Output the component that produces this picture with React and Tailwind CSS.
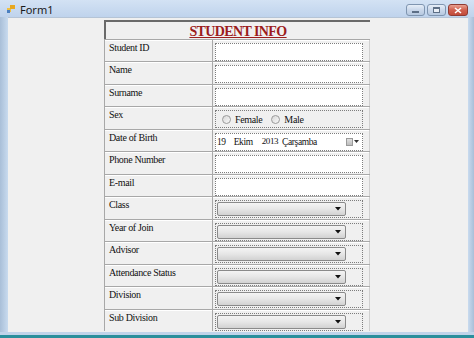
import React from "react";

const serif = { fontFamily: '"Liberation Serif", "Times New Roman", serif' };

function TextBox() {
  return <div className="mt-[3px] ml-[2px] w-[148px] h-[18px] bg-white border border-dotted border-[#7d7d7d]" />;
}

function Combo() {
  return (
    <div className="mt-[3px] ml-[2px] w-[148px] h-[18px] border border-dotted border-[#7d7d7d] flex items-center pl-[1px]">
      <div className="w-[129px] h-[14px] rounded-[2px] border border-[#8a8a8a] bg-gradient-to-b from-[#f4f4f4] via-[#e6e6e6] to-[#d2d2d2] flex items-center justify-end pr-[4px]">
        <svg width="6" height="4" viewBox="0 0 6 4"><path d="M0 0H6L3 3.5Z" fill="#111" /></svg>
      </div>
    </div>
  );
}

function Radio({ label }) {
  return (
    <div className="flex items-center gap-[4px]">
      <div className="w-[9px] h-[9px] rounded-full border border-[#9a9a9a] bg-gradient-to-br from-[#d8d8d8] to-[#f8f8f8]" />
      <span className="text-[10px] tracking-[-0.35px] text-[#111]" style={serif}>{label}</span>
    </div>
  );
}

function SexBox() {
  return (
    <div className="mt-[3px] ml-[2px] w-[148px] h-[18px] border border-dotted border-[#7d7d7d] flex items-center pl-[6px] gap-[9px]">
      <Radio label="Female" />
      <Radio label="Male" />
    </div>
  );
}

function DateBox() {
  return (
    <div className="mt-[3px] ml-[2px] w-[148px] h-[18px] bg-white border border-dotted border-[#7d7d7d] flex items-center pl-[1px] pr-[3px] text-[9.5px] tracking-[-0.4px] text-[#111]" style={serif}>
      <span>19</span>
      <span className="ml-[8px]">Ekim</span>
      <span className="ml-[9px] text-[9px]">2013</span>
      <span className="ml-[4px]">Çarşamba</span>
      <div className="ml-auto flex items-center gap-[1px]">
        <div className="w-[7px] h-[8px] border border-[#9a9a9a] bg-gradient-to-b from-[#e0e0e0] to-[#bdbdbd]" />
        <svg width="5" height="3" viewBox="0 0 5 3"><path d="M0 0H5L2.5 3Z" fill="#333" /></svg>
      </div>
    </div>
  );
}

const rows = [
  ["Student ID", "text"],
  ["Name", "text"],
  ["Surname", "text"],
  ["Sex", "sex"],
  ["Date of Birth", "date"],
  ["Phone Number", "text"],
  ["E-mail", "text"],
  ["Class", "combo"],
  ["Year of Join", "combo"],
  ["Advisor", "combo"],
  ["Attendance Status", "combo"],
  ["Division", "combo"],
  ["Sub Division", "combo"],
];

function Control({ kind }) {
  if (kind === "text") return <TextBox />;
  if (kind === "sex") return <SexBox />;
  if (kind === "date") return <DateBox />;
  return <Combo />;
}

function TitleButton({ kind }) {
  if (kind === "close") {
    return (
      <div className="w-[20px] h-[12px] rounded-[3px] border border-[#8f3b33] bg-gradient-to-b from-[#e8a092] via-[#d0604f] to-[#c24a3a] flex items-center justify-center">
        <svg width="8" height="7" viewBox="0 0 8 7"><path d="M1 1L7 6M7 1L1 6" stroke="#fff" strokeWidth="1.6" /></svg>
      </div>
    );
  }
  return (
    <div className="w-[19px] h-[12px] rounded-[3px] border border-[#7f95b0] bg-gradient-to-b from-[#e6eef8] via-[#c9d7ea] to-[#b7c9e0] flex items-center justify-center">
      {kind === "min" ? (
        <div className="w-[7px] h-[2px] mt-[3px] bg-white border-[0.5px] border-[#5d6f86]" />
      ) : (
        <div className="w-[7px] h-[6px] border border-[#5d6f86] border-t-2 bg-white/60" />
      )}
    </div>
  );
}

export default function App() {
  return (
    <div className="w-[474px] h-[338px] flex flex-col overflow-hidden bg-[#b8cde6]">
      {/* Title bar */}
      <div className="h-[17px] flex items-center bg-gradient-to-b from-[#d3e2f4] to-[#bfd3ec] relative">
        <svg className="ml-[7px]" width="8" height="8" viewBox="0 0 8 8">
          <rect x="0" y="3" width="4" height="4" fill="#f0c040" />
          <rect x="3" y="0" width="5" height="4" fill="#e8a820" />
          <rect x="0" y="5" width="3" height="3" fill="#4a7fc0" />
        </svg>
        <span className="ml-[5px] text-[11px] text-[#1a1a1a] leading-none mt-[1px]" style={{ fontFamily: '"Noto Sans", "Liberation Sans", sans-serif' }}>Form1</span>
        <div className="ml-auto mr-[6px] mt-[3px] flex gap-[2px]">
          <TitleButton kind="min" />
          <TitleButton kind="max" />
          <TitleButton kind="close" />
        </div>
      </div>
      {/* Body */}
      <div className="h-[315px] flex">
        <div className="w-[8px] bg-gradient-to-r from-[#a9bfd8] to-[#c9dbef]" />
        <div className="w-[460px] bg-[#f0f0f0] border-t border-[#b5c4d6]">
          <div className="ml-[96px] mt-[2px] w-[266px] flex flex-col">
            {/* Header */}
            <div className="h-[19px] border-t-2 border-l-2 border-[#6a6a6a] flex items-center justify-center">
              <span className="text-[14px] font-bold tracking-[-0.6px] underline text-[#9c1c1c] leading-none mt-[2px]" style={serif}>STUDENT INFO</span>
            </div>
            {/* Rows */}
            <div className="h-[292px] grid grid-rows-[repeat(13,1fr)]">
              {rows.map(([label, kind]) => (
                <div key={label} className="flex border-t border-[#a8a8a8] shadow-[inset_0_1px_0_#ffffff]">
                  <div className="w-[109px] border-l border-r border-[#a8a8a8] pl-[4px] pt-[2px]">
                    <span className="text-[10px] tracking-[-0.35px] text-[#111] leading-[12px] block" style={serif}>{label}</span>
                  </div>
                  <div className="flex-1 border-r border-[#d0d0d0]">
                    <Control kind={kind} />
                  </div>
                </div>
              ))}
            </div>
          </div>
        </div>
        <div className="w-[6px] bg-gradient-to-r from-[#c9dbef] to-[#a9bfd8]" />
      </div>
      <div className="h-[3px] bg-[#c0d4ea]" />
      <div className="h-[3px] bg-[#2a8f9c]" />
    </div>
  );
}
